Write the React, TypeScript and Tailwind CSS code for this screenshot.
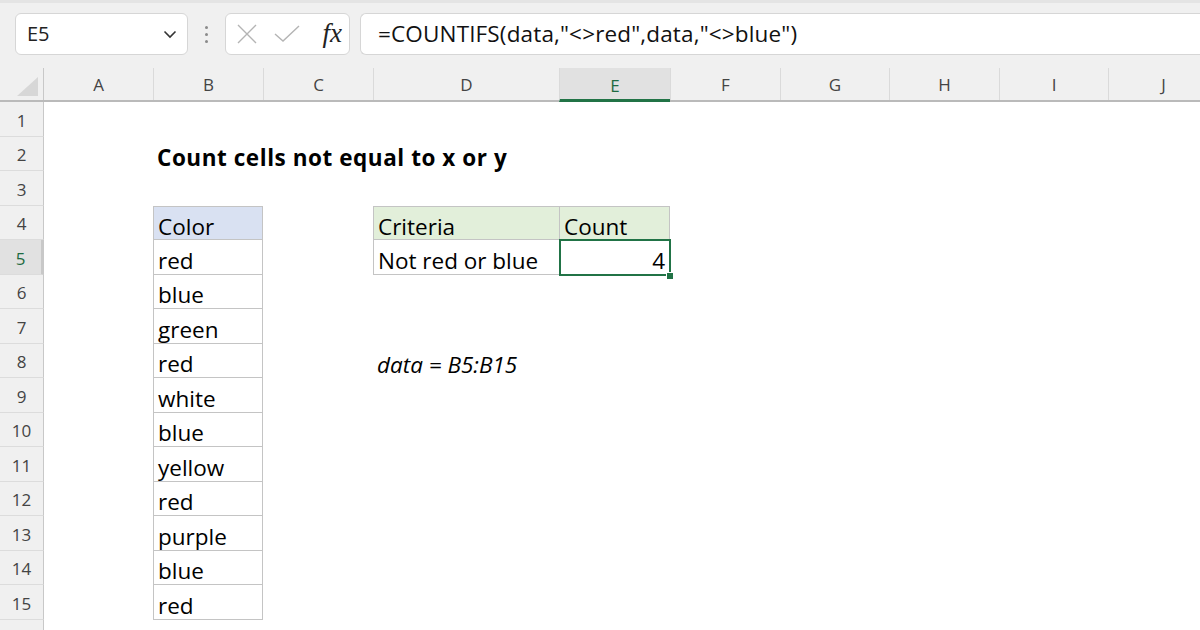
import React from "react";

const COLS = ["A", "B", "C", "D", "E", "F", "G", "H", "I", "J"];
const GRID = "grid grid-cols-[44px_109px_110px_110px_186px_111px_110px_109px_110px_109px_110px] grid-rows-[34.5px]";
const HEAD_GRID = "grid grid-cols-[44px_109px_110px_110px_186px_111px_110px_109px_110px_109px_110px]";

type Cell = {
  text?: string;
  bg?: string;
  bold?: boolean;
  italic?: boolean;
  right?: boolean;
  table?: { t?: boolean; l?: boolean; r?: boolean; b?: boolean };
  selected?: boolean;
};

const colorList = ["red", "blue", "green", "red", "white", "blue", "yellow", "red", "purple", "blue", "red"];

function buildCells(): Record<string, Cell> {
  const c: Record<string, Cell> = {};
  c["B2"] = { text: "Count cells not equal to x or y", bold: true };
  c["B4"] = { text: "Color", bg: "bg-[#d9e1f2]", table: { t: true, l: true, r: true, b: true } };
  colorList.forEach((v, i) => {
    c["B" + (5 + i)] = { text: v, table: { l: true, r: true, b: true } };
  });
  c["D4"] = { text: "Criteria", bg: "bg-[#e2efda]", table: { t: true, l: true, b: true } };
  c["E4"] = { text: "Count", bg: "bg-[#e2efda]", table: { t: true, l: true, r: true, b: true } };
  c["D5"] = { text: "Not red or blue", table: { l: true, b: true } };
  c["E5"] = { text: "4", right: true, table: { l: true, r: true, b: true }, selected: true };
  c["D8"] = { text: "data = B5:B15", italic: true };
  return c;
}

const cells = buildCells();

function DataCell({ cell }: { cell?: Cell }) {
  if (!cell) return <div className="h-[34.5px]" />;
  const t = cell.table;
  return (
    <div
      className={[
        "relative h-[34.5px] flex items-center px-[4px] whitespace-nowrap text-[22.5px] leading-[24px] text-black",
        cell.bg ?? "",
        cell.bold ? "font-bold tracking-[0.55px]" : "",
        cell.italic ? "italic" : "",
        cell.right ? "justify-end" : "",
        t?.t ? "border-t border-t-[#c4c4c4]" : "",
        t?.l ? "border-l border-l-[#c4c4c4]" : "",
        t?.r ? "border-r border-r-[#c4c4c4]" : "",
        t?.b ? "border-b border-b-[#c4c4c4]" : "",
      ].join(" ")}
      style={{ fontFamily: "'Open Sans', 'Noto Sans', sans-serif" }}
    >
      <span className="relative z-10 pt-[8px]">{cell.text}</span>
      {cell.selected && (
        <>
          <div className="absolute left-[-1px] top-[-1px] right-[-2px] bottom-[-2px] border-2 border-[#217346] z-20" />
          <div className="absolute right-[-5px] bottom-[-6px] w-[8px] h-[8px] bg-[#217346] border border-white z-30" />
        </>
      )}
    </div>
  );
}

export default function App() {
  const rows = Array.from({ length: 15 }, (_, i) => i + 1);
  const ui = { fontFamily: "'Segoe UI', 'Open Sans', 'Noto Sans', sans-serif" };
  return (
    <div className="w-[1200px] h-[630px] overflow-hidden bg-white relative" style={ui}>
      {/* toolbar */}
      <div className="h-[68px] bg-[#f0f0f0] flex items-start pt-[13px] pl-[15px] border-t-[3px] border-t-[#e4e4e4]">
        <div className="w-[173px] h-[42px] -mt-[3px] bg-white border border-[#d6d6d6] rounded-[6px] flex items-center justify-between pl-[11px] pr-[10px]">
          <span className="text-[20px] text-[#222]">E5</span>
          <svg width="14" height="9" viewBox="0 0 14 9">
            <path d="M1.5 1.5 L7 7 L12.5 1.5" fill="none" stroke="#333" strokeWidth="1.6" />
          </svg>
        </div>
        <div className="w-[37px] h-[42px] -mt-[3px] flex flex-col items-center justify-center gap-[4px]">
          <div className="w-[3px] h-[3px] rounded-full bg-[#8a8a8a]" />
          <div className="w-[3px] h-[3px] rounded-full bg-[#8a8a8a]" />
          <div className="w-[3px] h-[3px] rounded-full bg-[#8a8a8a]" />
        </div>
        <div className="w-[125px] h-[42px] -mt-[3px] bg-white border border-[#d6d6d6] rounded-[6px] flex items-center pl-[10px] pr-[7px]">
          <svg width="22" height="22" viewBox="0 0 22 22">
            <path d="M2 2 L20 20 M20 2 L2 20" stroke="#b4b4b4" strokeWidth="1.4" fill="none" />
          </svg>
          <svg width="28" height="22" viewBox="0 0 28 22" className="ml-[15px]">
            <path d="M2 11 L10 18 L26 3" stroke="#b4b4b4" strokeWidth="1.4" fill="none" />
          </svg>
          <span
            className="ml-auto text-[27px] italic text-[#222] leading-none pb-[2px]"
            style={{ fontFamily: "'Liberation Serif', 'DejaVu Serif', serif" }}
          >
            fx
          </span>
        </div>
        <div className="ml-[10px] flex-1 h-[42px] -mt-[3px] bg-white border border-[#d6d6d6] rounded-l-[6px] border-r-0 flex items-center pl-[17px]">
          <span className="text-[22.5px] text-[#111] tracking-[0.15px]">=COUNTIFS(data,"&lt;&gt;red",data,"&lt;&gt;blue")</span>
        </div>
      </div>

      {/* column header */}
      <div className={HEAD_GRID + " h-[34px] bg-[#f0f0f0] border-b-2 border-b-[#bababa]"}>
        <div className="relative border-r border-r-[#c8c8c8]">
          <svg className="absolute left-[17px] top-[9px]" width="22" height="20" viewBox="0 0 22 20">
            <path d="M21 0 L21 19 L0 19 Z" fill="#d7d7d7" />
          </svg>
        </div>
        {COLS.map((c, i) => (
          <div
            key={c}
            className={[
              "flex items-center justify-center text-[17px] pt-[2px]",
              i > 0 ? "border-l border-l-[#dadada]" : "",
              c === "E" ? "bg-[#e1e1e1] text-[#1e6b41] border-b-[3px] border-b-[#217346] -mb-[2px] pt-[4px]" : "text-[#444]",
            ].join(" ")}
          >
            {c}
          </div>
        ))}
      </div>

      {/* rows */}
      {rows.map((r) => (
        <div key={r} className={GRID + " h-[34.5px]"}>
          <div
            className={[
              "flex items-center justify-center text-[17px] pt-[3px] border-b border-b-[#dcdcdc] border-r border-r-[#c8c8c8]",
              r === 5 ? "bg-[#e1e1e1] text-[#1e6b41] border-r-[3px] border-r-[#217346]" : "bg-[#f0f0f0] text-[#444]",
            ].join(" ")}
          >
            {r}
          </div>
          {COLS.map((c) => (
            <DataCell key={c} cell={cells[c + r]} />
          ))}
        </div>
      ))}
      <div className="w-[44px] h-[20px] bg-[#f0f0f0] border-r border-r-[#c8c8c8]" />
    </div>
  );
}
